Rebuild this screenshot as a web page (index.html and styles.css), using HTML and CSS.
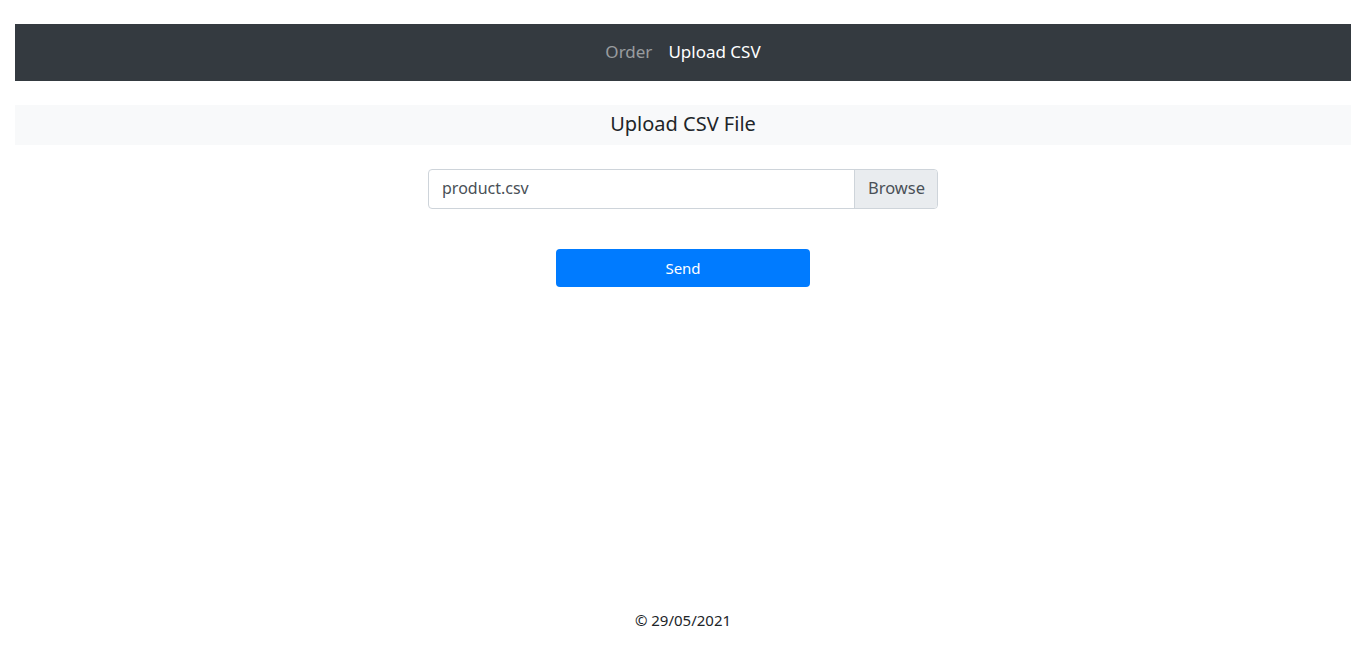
FILE: index.html
```html
<!DOCTYPE html>
<html>
<head>
<meta charset="utf-8">
<link rel="stylesheet" href="styles.css">
</head>
<body>
<div class="page">
  <nav class="navbar">
    <a class="nav-link">Order</a>
    <a class="nav-link active">Upload CSV</a>
  </nav>
  <div class="title-bar">Upload CSV File</div>
  <form class="upload-form">
    <div class="file-input">
      <span class="file-name">product.csv</span>
      <span class="browse">Browse</span>
    </div>
    <button type="button" class="send">Send</button>
  </form>
  <footer class="footer">© 29/05/2021</footer>
</div>
</body>
</html>
```
FILE: styles.css
```css
* { box-sizing: border-box; }
html, body { margin: 0; padding: 0; }
body {
  font-family: "Noto Sans", "Open Sans", sans-serif;
  color: #212529;
  background: #fff;
  height: 664px;
}
.page {
  padding: 24px 15px 0;
  display: flex;
  flex-direction: column;
  height: 664px;
}
.navbar {
  background: #343a40;
  height: 57px;
  display: flex;
  justify-content: center;
  align-items: center;
  gap: 16px;
  font-size: 17px;
  padding-bottom: 2px;
}
.nav-link { color: rgba(255,255,255,0.5); }
.nav-link.active { color: #fff; }
.title-bar {
  margin-top: 24px;
  background: #f8f9fa;
  height: 40px;
  display: flex;
  align-items: center;
  justify-content: center;
  font-size: 20px;
  padding-bottom: 3px;
}
.upload-form {
  display: flex;
  flex-direction: column;
  align-items: center;
  margin-top: 24px;
}
.file-input {
  width: 510px;
  height: 40px;
  border: 1px solid #ced4da;
  border-radius: 4px;
  display: flex;
  overflow: hidden;
  color: #495057;
  font-size: 16px;
}
.file-name {
  flex: 1;
  display: flex;
  align-items: center;
  padding-left: 13px;
  padding-bottom: 3px;
}
.browse {
  background: #e9ecef;
  border-left: 1px solid #ced4da;
  display: flex;
  align-items: center;
  padding: 0 12px 3px 13px;
  font-size: 16.5px;
}
.send {
  margin-top: 40px;
  width: 254px;
  height: 38px;
  background: #007bff;
  color: #fff;
  border: none;
  border-radius: 4px;
  font-family: inherit;
  font-size: 15px;
  padding-bottom: 2px;
}
.footer {
  margin-top: auto;
  height: 57px;
  text-align: center;
  font-size: 15px;
  padding-top: 3px;
}
```
